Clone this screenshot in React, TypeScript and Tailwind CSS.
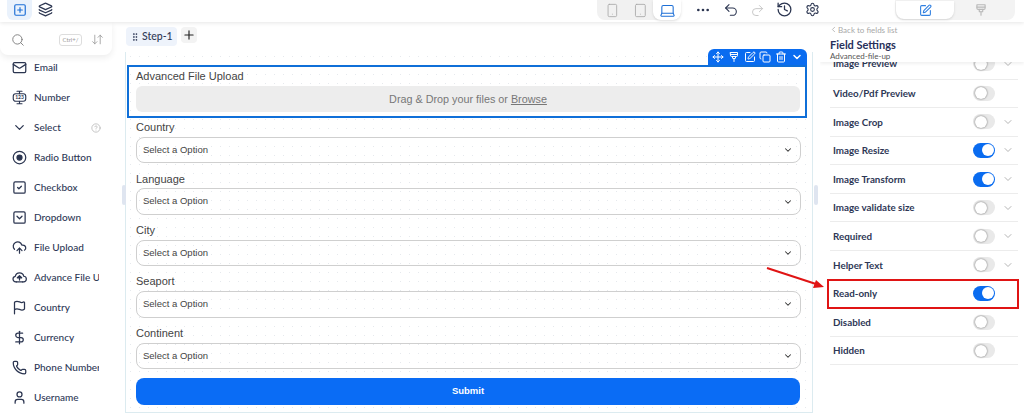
import React from 'react';
import {
  ArrowDownUp, ChevronDown, ChevronLeft, CloudUpload, Copy, DollarSign, Ellipsis, Flag, GripVertical,
  History, Laptop, Layers, Mail, Move, Phone, Plus, Redo2, Search, Settings, Smartphone, SquareCheck, SquareChevronDown,
  SquarePen, SquarePlus, Tablet, Trash2, Undo2, User, CircleHelp,
} from 'lucide-react';

const UI_FONT = "font-['Lato','Noto_Sans',sans-serif]";

function FunnelIcon({ className }: { className?: string }) {
  return (
    <svg viewBox="0 0 24 24" fill="none" stroke="currentColor" strokeWidth="2" strokeLinecap="round" strokeLinejoin="round" className={className}>
      <path d="M5 3h14v6a2 2 0 0 1-2 2H7a2 2 0 0 1-2-2z" />
      <path d="M5 7h14" />
      <path d="M9 11v3a1 1 0 0 0 1 1h4a1 1 0 0 0 1-1v-3" />
      <path d="M12 15v6" />
    </svg>
  );
}

function NumberIcon({ className }: { className?: string }) {
  return (
    <svg viewBox="0 0 24 24" fill="none" stroke="currentColor" strokeWidth="1.8" strokeLinecap="round" className={className}>
      <rect x="2" y="6" width="20" height="12" rx="4" />
      <path d="M12 2v4M12 18v4M8 2h8M8 22h8" />
      <text x="12" y="14.5" fontSize="8" textAnchor="middle" fill="currentColor" stroke="none" fontWeight="700">123</text>
    </svg>
  );
}

function RadioIcon({ className }: { className?: string }) {
  return (
    <svg viewBox="0 0 24 24" fill="none" stroke="currentColor" strokeWidth="2" className={className}>
      <circle cx="12" cy="12" r="10" />
      <circle cx="12" cy="12" r="4" fill="currentColor" />
    </svg>
  );
}

function CloudArrowIcon({ className }: { className?: string }) {
  return (
    <svg viewBox="0 0 24 24" fill="none" stroke="currentColor" strokeWidth="2" strokeLinejoin="round" strokeLinecap="round" className={className}>
      <path d="M7 19H6a4.5 4.5 0 0 1-.8-8.9A7 7 0 0 1 18.8 10a4.5 4.5 0 0 1-.8 9h-1" />
      <path d="M7 19h10" />
      <path d="M12 16V10" />
      <path d="M8.5 12.5 12 9l3.5 3.5z" fill="currentColor" />
    </svg>
  );
}

const fieldTypes = [
  { label: 'Email', icon: Mail },
  { label: 'Number', icon: NumberIcon },
  { label: 'Select', icon: ChevronDown, help: true },
  { label: 'Radio Button', icon: RadioIcon },
  { label: 'Checkbox', icon: SquareCheck },
  { label: 'Dropdown', icon: SquareChevronDown },
  { label: 'File Upload', icon: CloudUpload },
  { label: 'Advance File Upload', icon: CloudArrowIcon },
  { label: 'Country', icon: Flag },
  { label: 'Currency', icon: DollarSign },
  { label: 'Phone Number', icon: Phone },
  { label: 'Username', icon: User },
];

const selects = ['Country', 'Language', 'City', 'Seaport', 'Continent'];

const settings = [
  { label: 'Video/Pdf Preview', on: false, more: false },
  { label: 'Image Crop', on: false, more: true },
  { label: 'Image Resize', on: true, more: true },
  { label: 'Image Transform', on: true, more: true },
  { label: 'Image validate size', on: false, more: true },
  { label: 'Required', on: false, more: true },
  { label: 'Helper Text', on: false, more: true },
  { label: 'Read-only', on: true, more: false },
  { label: 'Disabled', on: false, more: false },
  { label: 'Hidden', on: false, more: false },
];

function Toggle({ on }: { on: boolean }) {
  return (
    <span className={`flex h-[15px] w-[22px] items-center rounded-full px-[1.5px] ${on ? 'justify-end bg-[#0a6cf0]' : 'justify-start bg-[#e9e9e9]'}`}>
      <span className={`h-[12px] w-[12px] rounded-full bg-white ${on ? '' : 'shadow-[0_0_2px_rgba(0,0,0,0.6)]'}`} />
    </span>
  );
}

function TopBar() {
  return (
    <header className="relative z-20 flex h-[22px] shrink-0 items-start bg-white shadow-[0_1px_4px_rgba(0,0,0,0.1)]">
      <div className="ml-[7px] flex h-[20px] w-[25px] items-center justify-center rounded-b-md bg-[#eaf2fc]">
        <SquarePlus className="h-[14px] w-[14px] text-[#1d6fd6]" />
      </div>
      <Layers className="ml-[6px] mt-[2px] h-[15px] w-[15px] text-[#2b3550]" />

      <div className="ml-[544px] flex h-[20px] w-[84px] items-center rounded-b-lg bg-[#f1f1f1] pl-[8px]">
        <Smartphone className="h-[15px] w-[15px] text-[#a9a9a9]" strokeWidth={1.4} />
        <Tablet className="ml-[13px] h-[15px] w-[15px] text-[#a9a9a9]" strokeWidth={1.4} />
        <span className="ml-[6px] flex h-[20px] w-[28px] items-center justify-center rounded-b-lg bg-white shadow-sm">
          <Laptop className="h-[17px] w-[17px] text-[#1d6fd6]" strokeWidth={1.5} />
        </span>
      </div>
      <Ellipsis className="ml-[14px] mt-[2px] h-[16px] w-[16px] text-[#2b3550]" />
      <Undo2 className="ml-[12px] mt-[2px] h-[16px] w-[16px] text-[#2b3550]" strokeWidth={1.6} />
      <Redo2 className="ml-[11px] mt-[3px] h-[15px] w-[15px] text-[#c4c4c4]" strokeWidth={1.5} />
      <History className="ml-[11px] mt-[1px] h-[17px] w-[17px] text-[#2b3550]" strokeWidth={1.8} />
      <Settings className="ml-[12px] mt-[2px] h-[15px] w-[15px] text-[#2b3550]" strokeWidth={1.7} />

      <div className="ml-[75px] flex h-[20px] w-[120px] items-center rounded-b-lg bg-[#f3f3f3]">
        <span className="ml-[1px] flex h-[18px] w-[58px] items-center justify-center rounded-b-lg bg-white shadow-sm">
          <SquarePen className="h-[13px] w-[13px] text-[#2f7fe0]" />
        </span>
        <FunnelIcon className="ml-[20px] h-[14px] w-[14px] text-[#b9b9b9]" />
      </div>
    </header>
  );
}

function Sidebar() {
  return (
    <aside className={`relative w-[120px] shrink-0 overflow-hidden ${UI_FONT}`}>
      <div className="absolute left-0 top-0 z-10 flex h-[33px] w-[112px] items-center rounded-b-lg bg-white pl-[11px] pt-[2px] shadow-[0_3px_6px_rgba(0,0,0,0.07)]">
        <Search className="h-[14px] w-[14px] text-[#777]" strokeWidth={1.5} />
        <span className="ml-[34px] flex h-[12px] w-[23px] items-center justify-center rounded-[3px] border border-[#ddd] text-[6px] leading-none text-[#9a9a9a]">Ctrl+/</span>
        <ArrowDownUp className="ml-[9px] h-[13px] w-[13px] text-[#999]" strokeWidth={1.5} />
      </div>
      <ul className="pt-[30px]">
        {fieldTypes.map(({ label, icon: Icon, help }) => (
          <li key={label} className="flex h-[30px] items-center pl-[12px] pt-[1px]">
            <Icon className="h-[15px] w-[15px] shrink-0 text-[#2b3550]" />
            <span className="ml-[7px] w-[65px] overflow-hidden whitespace-nowrap text-[10px] font-medium text-[#2e3856]">{label}</span>
            {help && <CircleHelp className="-ml-[8px] h-[10px] w-[10px] text-[#bbb]" />}
          </li>
        ))}
      </ul>
    </aside>
  );
}

function SelectField({ label }: { label: string }) {
  return (
    <div className="mb-[6px] mr-[11px] pl-[9px]">
      <div className="flex h-[19px] items-center text-[11px] text-[#444]">{label}</div>
      <div className="flex h-[26.4px] items-center justify-between rounded-lg border border-[#cfcfcf] pl-[6px] pr-[7px] text-[9.5px] text-[#444]">
        <span>Select a Option</span>
        <ChevronDown className="h-[10px] w-[10px] text-[#333]" strokeWidth={2.5} />
      </div>
    </div>
  );
}

function Canvas() {
  return (
    <main className="relative flex w-[700px] shrink-0 flex-col pl-[5px] font-['Liberation_Sans',Arial,sans-serif]">
      <div className={`flex h-[30px] items-start pl-[1px] pt-[5px] ${UI_FONT}`}>
        <span className="flex h-[19px] w-[51px] items-center rounded bg-[#eef3fb] pl-[4px] text-[10.5px] font-medium text-[#2e3856]">
          <GripVertical className="h-[10px] w-[10px] text-[#2e3856]" />
          <span className="ml-[2px]">Step-1</span>
        </span>
        <span className="ml-[4px] flex h-[16px] w-[16px] items-center justify-center rounded bg-[#f3f3f3]">
          <Plus className="h-[14px] w-[14px] text-[#222]" />
        </span>
      </div>
      <div className="relative h-[361px] w-[688px] border border-t-0 border-[#dcebf0] bg-[radial-gradient(#e6e9ed_0.8px,transparent_1px)] bg-[length:9px_9px] pl-[1px] pt-[13px]">
        <div className="absolute right-[5px] top-[-3px] flex h-[16px] w-[99px] items-center justify-between rounded-t-md bg-[#0a6cf0] px-[4px] text-white">
          <Move className="h-[12px] w-[12px]" />
          <FunnelIcon className="h-[12px] w-[12px]" />
          <SquarePen className="h-[12px] w-[12px]" />
          <Copy className="h-[12px] w-[12px]" />
          <Trash2 className="h-[12px] w-[12px]" />
          <ChevronDown className="h-[12px] w-[12px]" strokeWidth={3} />
        </div>
        <div className="mr-[5px] h-[53px] border-2 border-[#0f6fd8] pl-[7px] pr-[5px]">
          <div className="flex h-[19px] items-center text-[11px] text-[#444]">Advanced File Upload</div>
          <div className="flex h-[26px] items-center justify-center rounded-md bg-[#ededed] text-[10.8px] text-[#777]">
            <span>Drag &amp; Drop your files or <span className="underline">Browse</span></span>
          </div>
        </div>
        {selects.map((name) => (
          <SelectField key={name} label={name} />
        ))}
        <div className="ml-[9px] mr-[12px] mt-[9px] flex h-[27px] items-center justify-center rounded-lg bg-[#0a6cf5] text-[9.5px] font-bold text-white">
          Submit
        </div>
      </div>
      <span className="absolute left-[2px] top-[163px] h-[20px] w-[4px] rounded bg-[#dfe5f0]" />
      <span className="absolute right-[2px] top-[163px] h-[20px] w-[4px] rounded bg-[#dfe5f0]" />
    </main>
  );
}

function SettingsPanel() {
  return (
    <aside className={`relative flex-1 overflow-hidden ${UI_FONT}`}>
      <div className="absolute left-0 top-0 z-10 h-[40px] w-full bg-white pl-[10px] shadow-[0_2px_3px_rgba(0,0,0,0.06)]">
        <div className="flex h-[14px] items-center pt-[1px] text-[8px] text-[#a8a8a8]">
          <ChevronLeft className="-ml-[1px] h-[9px] w-[9px]" />
          <span>Back to fields list</span>
        </div>
        <div className="mt-[2px] text-[11px] font-bold leading-[13px] text-[#27305a]">Field Settings</div>
        <div className="text-[8px] leading-[11px] text-[#555]">Advanced-file-up</div>
      </div>
      <div className="ml-[10px] mr-[6px] pt-[27px]">
        <div className="flex h-[30.5px] items-center border-b border-[#ececec] pl-[3px]">
          <span className="text-[9.8px] font-bold text-[#2e3856]">Image Preview</span>
          <span className="ml-auto"><Toggle on={false} /></span>
          <span className="ml-[7px] w-[16px]">
            <ChevronDown className="h-[12px] w-[12px] text-[#b5b5b5]" />
          </span>
        </div>
        {settings.map((row) => (
          <div key={row.label} className="flex h-[28.6px] items-center border-b border-[#ececec] pl-[3px]">
            <span className="text-[9.8px] font-bold text-[#2e3856]">{row.label}</span>
            <span className="ml-auto"><Toggle on={row.on} /></span>
            <span className="ml-[7px] w-[16px]">
              {row.more && <ChevronDown className="h-[12px] w-[12px] text-[#b5b5b5]" />}
            </span>
          </div>
        ))}
      </div>
      <div className="absolute left-[7px] top-[257px] z-10 h-[30px] w-[192px] border-2 border-[#e01414]" />
    </aside>
  );
}

export default function App() {
  return (
    <div className="relative flex h-[417px] w-[1024px] flex-col overflow-hidden bg-white">
      <TopBar />
      <div className="flex min-h-0 flex-1">
        <Sidebar />
        <Canvas />
        <SettingsPanel />
      </div>
      <svg className="absolute left-[760px] top-[260px] z-30 h-[34px] w-[70px]" viewBox="0 0 70 34">
        <path d="M7 8 L56 24" stroke="#e01414" strokeWidth="2" />
        <path d="M64 27 L53 28 L56 20 Z" fill="#e01414" />
      </svg>
    </div>
  );
}
